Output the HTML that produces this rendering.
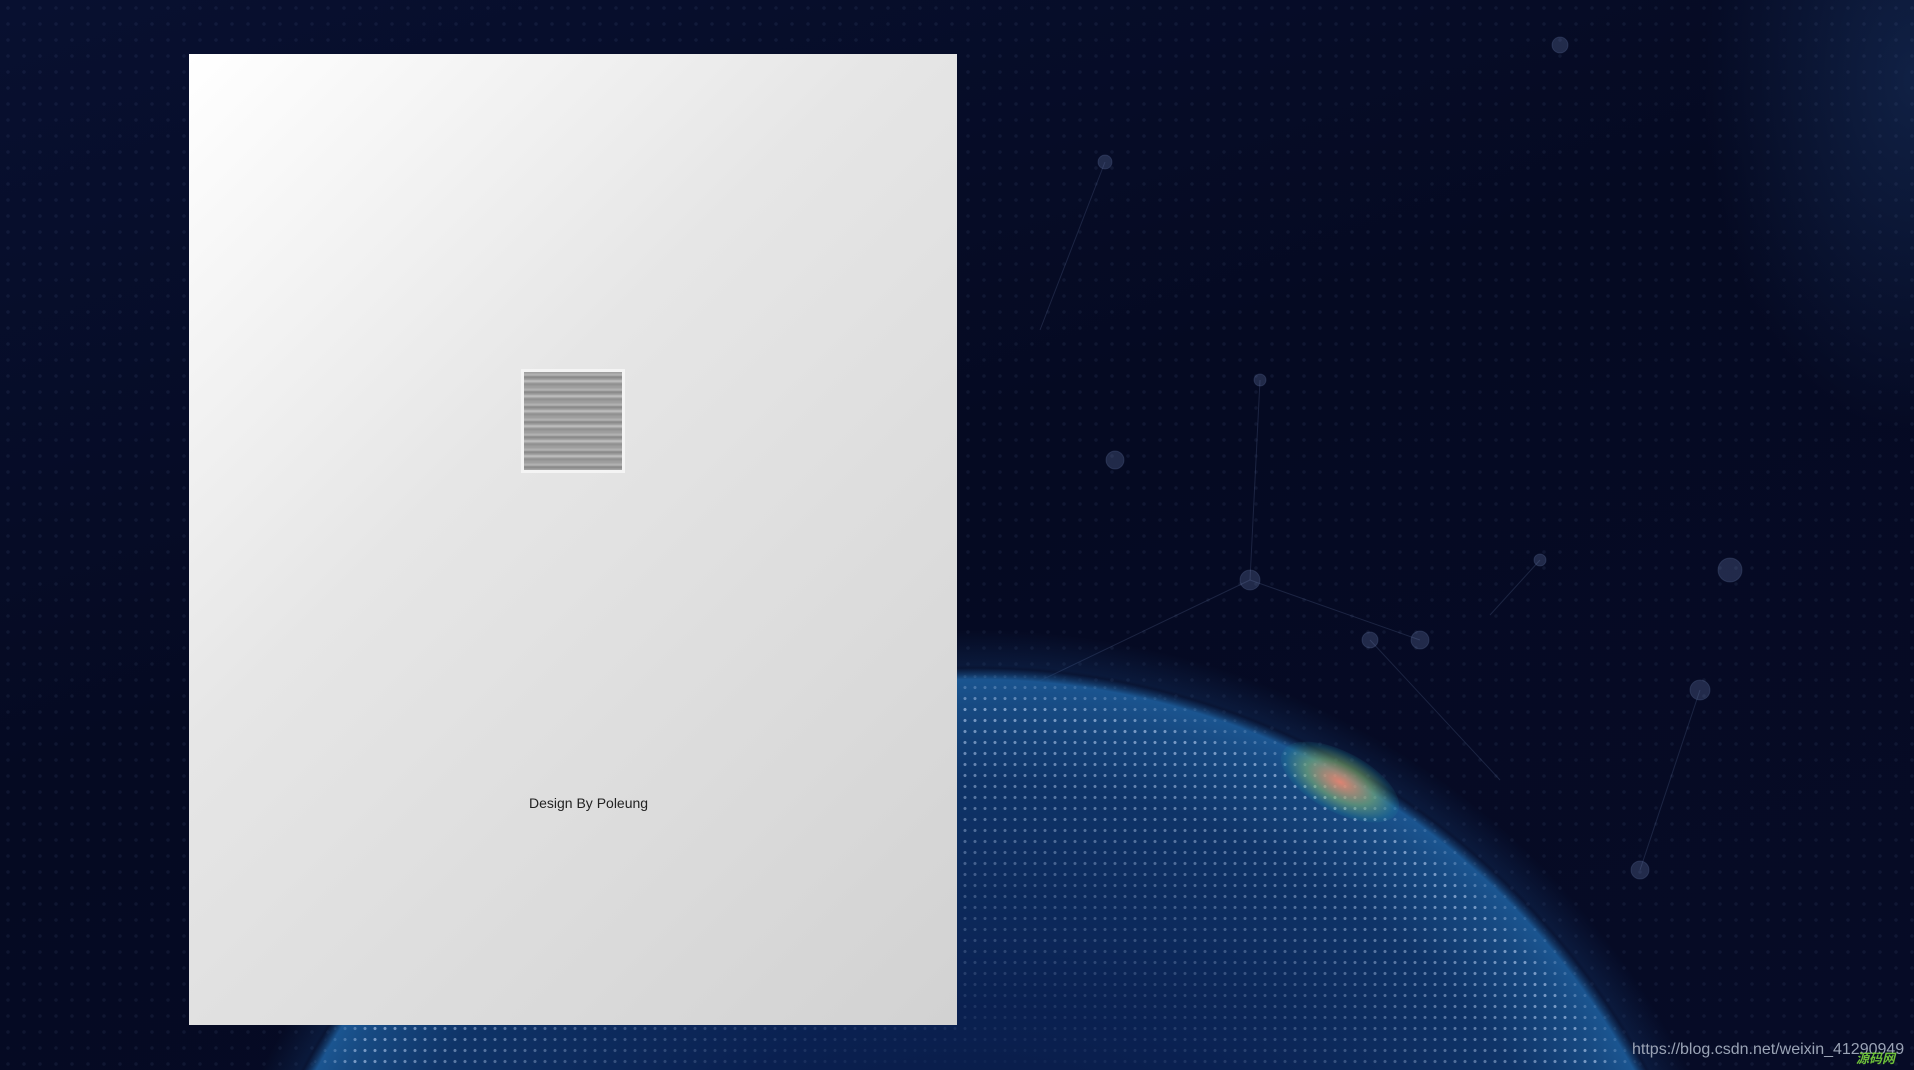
<!DOCTYPE html>
<html><head><meta charset="utf-8"><style>
html,body{margin:0;padding:0;width:1914px;height:1070px;overflow:hidden;}
body{position:relative;font-family:"Liberation Sans",sans-serif;
background:
radial-gradient(ellipse 300px 500px at 1914px 80px, rgba(30,60,110,0.45), transparent 70%),
linear-gradient(160deg,#081030 0%,#050a22 45%,#060b26 100%);}
.layer{position:absolute;left:0;top:0;width:1914px;height:1070px;overflow:hidden;}
.fdots{background-image:radial-gradient(circle,rgba(110,130,180,0.10) 1.5px,transparent 2px);
background-size:16px 16px;}
.globe{background:
radial-gradient(circle 800px at 975px 1430px, transparent 755px, rgba(40,110,190,0.15) 765px, transparent 800px),
radial-gradient(circle 762px at 975px 1430px, #06122e 0%, #0a2050 55%, #0f3468 85%, #174a82 95%, #1b5590 98.5%, rgba(20,60,110,0.3) 99.7%, transparent 100%);}
.gdots{background-image:radial-gradient(circle,rgba(200,222,255,0.65) 1.3px,transparent 1.8px);
background-size:10px 11px;
-webkit-mask-image:radial-gradient(circle 760px at 975px 1430px,transparent 45%,rgba(0,0,0,0.4) 72%,rgba(0,0,0,0.85) 95%,transparent 100%);
mask-image:radial-gradient(circle 760px at 975px 1430px,transparent 45%,rgba(0,0,0,0.4) 72%,rgba(0,0,0,0.85) 95%,transparent 100%);}
.glow{position:absolute;left:1275px;top:752px;width:130px;height:60px;border-radius:50%;
transform:rotate(28deg);
background:radial-gradient(ellipse at center,rgba(255,140,110,0.85) 0%,rgba(150,200,110,0.5) 40%,rgba(40,160,160,0.2) 65%,transparent 75%);}
.panel{position:absolute;left:189px;top:54px;width:768px;height:971px;
background:linear-gradient(135deg,#ffffff 0%,#e6e6e6 40%,#d2d2d2 100%);}
.sq{position:absolute;left:521px;top:369px;width:98px;height:98px;border:3px solid #f4f4f4;
background:repeating-linear-gradient(180deg,#9a9a9a 0px,#b5b5b5 3px,#858585 5px,#a8a8a8 8px,#c4c4c4 9px,#8e8e8e 12px,#a0a0a0 15px);}
.credit{position:absolute;left:529px;top:795px;font-size:14px;color:#222;}
.url{position:absolute;left:1632px;top:1041px;font-size:16px;color:#9aa3b5;}
.wm{position:absolute;left:1856px;top:1048px;font-size:13px;color:#6fc23a;font-style:italic;font-weight:bold;font-family:"Liberation Sans","Noto Sans CJK SC",sans-serif;}
</style></head><body>
<div class="layer fdots"></div>
<svg style="position:absolute;left:0;top:0;display:block" width="1914" height="1070">
<g stroke="rgba(120,140,190,0.2)" stroke-width="1" fill="rgba(120,140,190,0.25)">
<line x1="1105" y1="162" x2="1040" y2="330"/><line x1="1260" y1="380" x2="1250" y2="580"/>
<line x1="1250" y1="580" x2="1420" y2="640"/><line x1="1490" y1="615" x2="1540" y2="560"/>
<line x1="1370" y1="640" x2="1500" y2="780"/><line x1="1700" y1="690" x2="1640" y2="870"/>
<line x1="1000" y1="700" x2="1250" y2="580"/>
<circle cx="1105" cy="162" r="7"/><circle cx="1260" cy="380" r="6"/><circle cx="1250" cy="580" r="10"/>
<circle cx="1420" cy="640" r="9"/><circle cx="1540" cy="560" r="6"/><circle cx="1700" cy="690" r="10"/>
<circle cx="1640" cy="870" r="9"/><circle cx="1730" cy="570" r="12"/><circle cx="1115" cy="460" r="9"/>
<circle cx="1560" cy="45" r="8"/><circle cx="1370" cy="640" r="8"/>
</g></svg>
<div class="layer globe"></div>
<div class="layer gdots"></div>
<div class="glow"></div>
<div class="panel"></div>
<div class="sq"></div>
<div class="credit">Design By Poleung</div>
<div class="url">https://blog.csdn.net/weixin_41290949</div>
<div class="wm">源码网</div>
</body></html>
